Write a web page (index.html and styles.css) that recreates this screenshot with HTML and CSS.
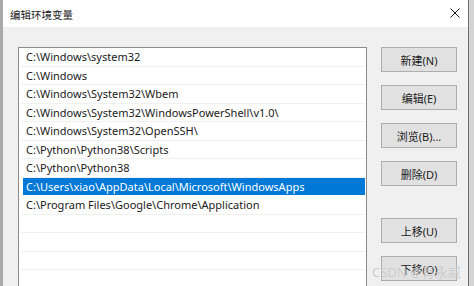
FILE: index.html
```html
<!DOCTYPE html>
<html lang="zh-CN">
<head>
<meta charset="utf-8">
<title>编辑环境变量</title>
<link rel="stylesheet" href="styles.css">
</head>
<body>
<div class="desk">
  <div class="bg-left"></div>
  <div class="window">
    <div class="titlebar">
      <span class="title">编辑环境变量</span>
      <svg class="close" width="10" height="10" viewBox="0 0 10 10"><path d="M0.5 0.5 L9.5 9.5 M9.5 0.5 L0.5 9.5" stroke="#1a1a1a" stroke-width="1" fill="none"/></svg>
    </div>
    <div class="content">
      <div class="list">
        <div class="row">C:\Windows\system32</div>
        <div class="row">C:\Windows</div>
        <div class="row">C:\Windows\System32\Wbem</div>
        <div class="row">C:\Windows\System32\WindowsPowerShell\v1.0\</div>
        <div class="row">C:\Windows\System32\OpenSSH\</div>
        <div class="row">C:\Python\Python38\Scripts</div>
        <div class="row">C:\Python\Python38</div>
        <div class="row selected"><span>C:\Users\xiao\AppData\Local\Microsoft\WindowsApps</span></div>
        <div class="row">C:\Program Files\Google\Chrome\Application</div>
        <div class="row"></div>
        <div class="row"></div>
        <div class="row"></div>
        <div class="row"></div>
      </div>
      <div class="buttons">
        <button class="btn">新建(N)</button>
        <button class="btn">编辑(E)</button>
        <button class="btn">浏览(B)...</button>
        <button class="btn">删除(D)</button>
        <button class="btn spaced">上移(U)</button>
        <button class="btn">下移(O)</button>
      </div>
    </div>
  </div>
  <div class="edge"></div>
  <div class="bg-right"></div>
</div>
<div class="watermark">CSDN @肖永威</div>
</body>
</html>
```

FILE: styles.css
```css
html, body {
  margin: 0;
  padding: 0;
}
body {
  width: 474px;
  height: 286px;
  overflow: hidden;
  position: relative;
  background: #f0f0f0;
  font-family: "Noto Sans", "Noto Sans CJK SC", sans-serif;
  color: #1a1a1a;
}
.desk {
  display: flex;
  height: 286px;
}
.bg-left {
  width: 3px;
  background: #a9a9a9;
}
.window {
  flex: 1;
  display: flex;
  flex-direction: column;
  background: #f0f0f0;
  overflow: hidden;
}
.titlebar {
  flex-shrink: 0;
  height: 27px;
  background: #ffffff;
  display: flex;
  align-items: center;
  justify-content: space-between;
  padding: 0 8px 0 7px;
}
.title {
  font-family: "Noto Sans CJK SC", sans-serif;
  font-size: 10.5px;
  color: #1a1a1a;
  margin-top: 1px;
}
.close {
  display: block;
  margin-bottom: 1px;
}
.content {
  flex-shrink: 0;
  display: flex;
  align-items: flex-start;
  padding: 20px 0 0 15px;
  gap: 14px;
}
.list {
  flex-shrink: 0;
  width: 344px;
  height: 240px;
  overflow: hidden;
  background: #ffffff;
  border: 1px solid #8c8c8c;
  border-bottom: none;
  padding: 0 1px 0 2px;
}
.row {
  height: 18.5px;
  box-sizing: border-box;
  border-bottom: 1px solid #f0f0f0;
  font-size: 11px;
  line-height: 17.5px;
  padding-left: 5px;
  white-space: nowrap;
  overflow: hidden;
}
.row.selected {
  background: #0078d7;
  color: #ffffff;
  border-bottom: 1px solid #ffffff;
  margin-left: 2px;
  padding-left: 3px;
}
.buttons {
  flex-shrink: 0;
  display: flex;
  flex-direction: column;
  gap: 13px;
  width: 76px;
}
.btn {
  height: 25px;
  width: 76px;
  background: #e1e1e1;
  border: 1px solid #adadad;
  font-family: "Noto Sans", "Noto Sans CJK SC", sans-serif;
  font-size: 11px;
  color: #1a1a1a;
  padding: 0;
}
.btn.spaced {
  margin-top: 19px;
}
.edge {
  width: 1px;
  background: #6e6e6e;
}
.bg-right {
  width: 5px;
  background: #d4d4d4;
}
.watermark {
  position: absolute;
  left: 372px;
  top: 262px;
  font-family: "Noto Sans", "Noto Sans CJK SC", sans-serif;
  font-size: 13px;
  color: rgba(160, 160, 160, 0.55);
  text-shadow: 0 0 1px rgba(255, 255, 255, 0.8);
  white-space: nowrap;
}
```
